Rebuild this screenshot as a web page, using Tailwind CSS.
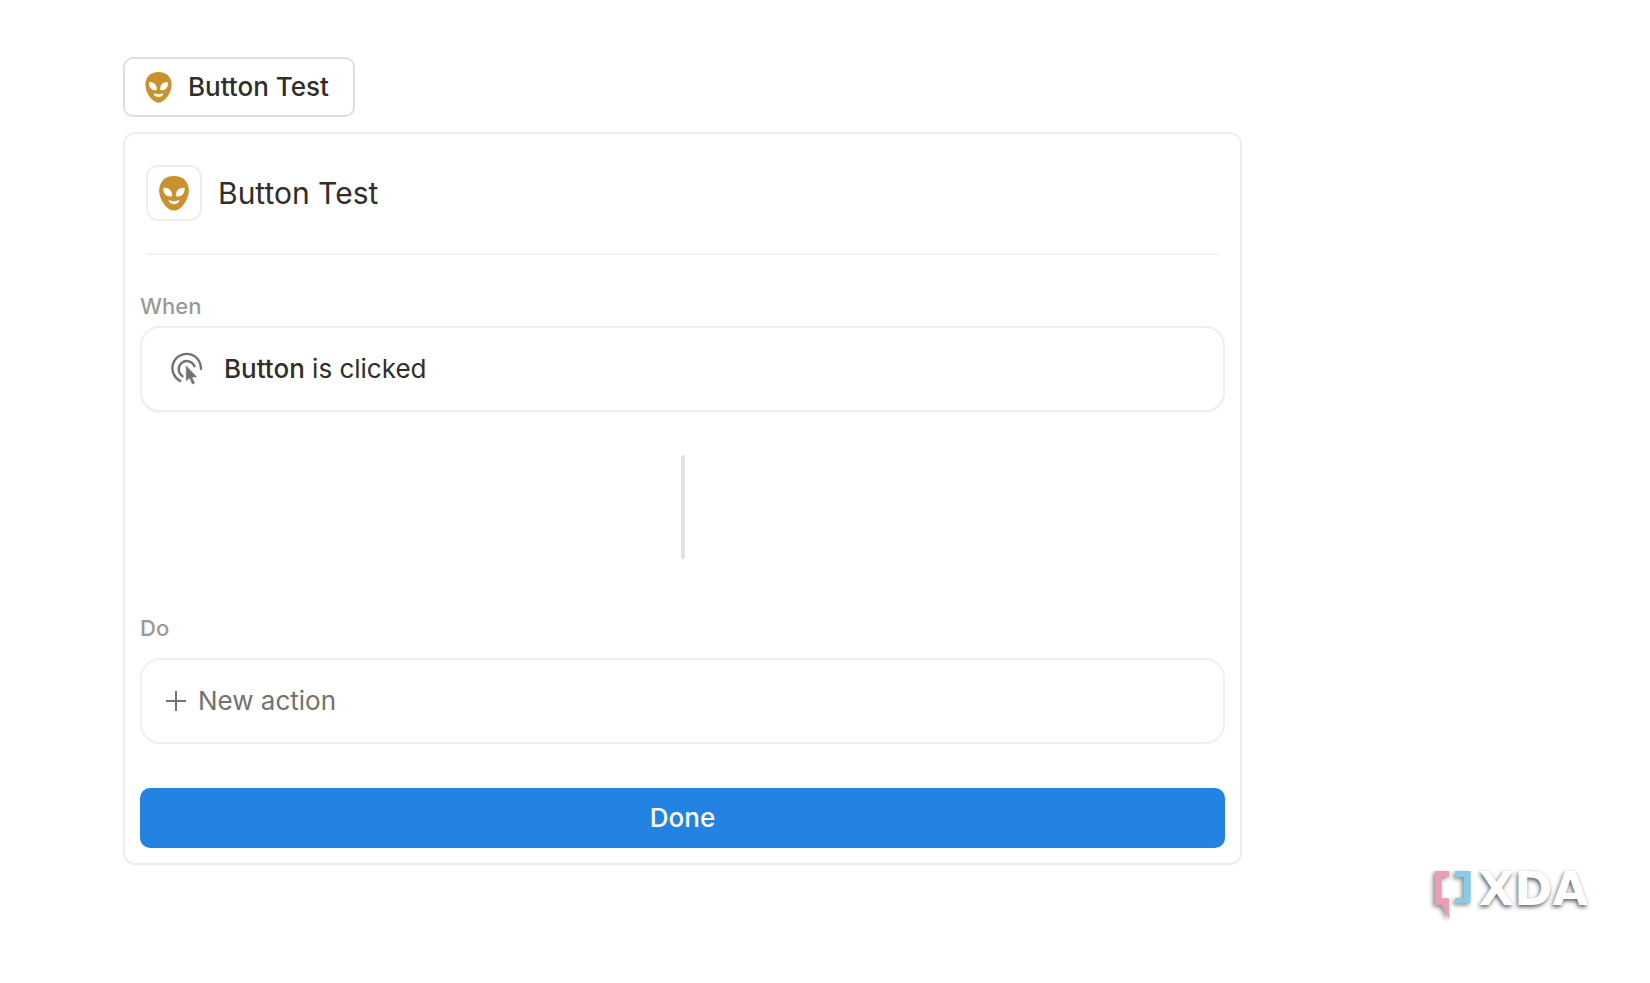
<!DOCTYPE html>
<html lang="en">
<head>
    <meta charset="UTF-8">
    <meta name="viewport" content="width=device-width, initial-scale=1.0">
    <title>Button Test</title>
    <script src="https://cdn.jsdelivr.net/npm/@tailwindcss/browser@4"></script>
</head>
<body class="min-h-screen bg-white font-['Inter',sans-serif] text-[#2f2e2b]">
    <!-- Shared icon -->
    <svg class="hidden" aria-hidden="true">
        <symbol id="alien" viewBox="0 0 78 92">
            <path fill="#c9922e" d="M39 0C15 0 0 16 0 38c0 26 22 53 39 53s39-27 39-53C78 16 63 0 39 0Z"/>
            <path fill="#fff" d="M11 31c13-2 23 6 23 20 0 2-1 3-3 3-12 1-21-8-20-23ZM67 31c-13-2-23 6-23 20 0 2 1 3 3 3 12 1 21-8 20-23Z"/>
            <path fill="#fff" d="M28 64c7 3 15 3 22 0 3-1 4 2 2 4-7 8-19 8-26 0-2-2-1-5 2-4Z"/>
        </symbol>
    </svg>

    <div class="px-4 lg:px-[123px] pt-[57px]">
        <button type="button" class="flex items-center gap-4 h-[60px] pl-5 pr-6 border-2 border-[#dfdfde] rounded-[10px] text-[26px] leading-8 font-medium">
            <svg class="w-[27px] h-[31px]" aria-hidden="true"><use href="#alien"/></svg>
            Button Test
        </button>

        <!-- Editor card -->
        <main class="w-full max-w-[1119px] mt-[15px] px-[15px] pb-[15px] border-2 border-[#eeeeed] rounded-xl">
            <header class="flex items-center gap-4 mx-[6px] pt-[31px] pb-8 border-b-2 border-[#f3f3f2]">
                <button type="button" aria-label="Change icon" class="flex items-center justify-center size-14 border-2 border-[#eeeeed] rounded-xl">
                    <svg class="w-[30px] h-[35px]" aria-hidden="true"><use href="#alien"/></svg>
                </button>
                <h1 class="text-[30px] leading-9">Button Test</h1>
            </header>

            <section>
                <h2 class="mt-[37px] mb-[6px] text-[22px] leading-7 font-medium text-[#9a9997]">When</h2>
                <button type="button" class="flex items-center gap-5 w-full h-[86px] px-7 border-2 border-[#eeeeed] rounded-[20px] text-[26px] leading-8 text-left shadow-xs">
                    <svg class="size-[34px]" viewBox="120 220 100 100" fill="none" stroke="#73726f" stroke-width="7" stroke-linecap="round" aria-hidden="true">
                        <path d="M211 270a42 42 0 1 0-61 35"/>
                        <path d="M192 262a24 24 0 1 0-35 29"/>
                        <path fill="#73726f" stroke-width="2" stroke-linejoin="round" d="M168 262v42l10-8 8 18 6-3-8-17 13-1Z"/>
                    </svg>
                    <span><span class="font-medium">Button</span> is clicked</span>
                </button>
            </section>

            <div class="w-1 h-[104px] mx-auto mt-[43px] rounded-full bg-[#e2e2e1]"></div>

            <section>
                <h2 class="mt-[55px] mb-4 text-[22px] leading-7 font-medium text-[#9a9997]">Do</h2>
                <button type="button" class="flex items-center gap-3 w-full h-[86px] px-6 border-2 border-[#f0f0ef] rounded-[20px] text-[26px] leading-8 text-[#73726f]">
                    <svg class="size-5" viewBox="0 0 20 20" stroke="#73726f" stroke-width="2" aria-hidden="true"><path d="M0 10h20M10 0v20"/></svg>
                    New action
                </button>
            </section>

            <button type="button" class="w-full h-[60px] mt-[44px] rounded-[10px] bg-[#2383e2] text-[26px] leading-8 font-medium text-white">Done</button>
        </main>
    </div>

    <!-- Watermark -->
    <footer class="flex justify-end items-start gap-2 pr-[62px] pt-[6px]">
        <svg class="w-9 h-12 overflow-visible drop-shadow-[-2px_2px_2px_#00000077]" viewBox="77 68 108 144" aria-hidden="true">
            <path fill="#eb9db5" d="M77 68h43v18H97v64h22v62l-22-42H77Z"/>
            <path fill="#86cbea" d="M138 68h46v97h-46v-17h25V86h-25Z"/>
        </svg>
        <span class="font-['DejaVu_Sans',sans-serif] font-bold text-[46px] leading-9 text-white [text-shadow:-1px_2px_4px_#000000aa]">XDA</span>
    </footer>
</body>
</html>
